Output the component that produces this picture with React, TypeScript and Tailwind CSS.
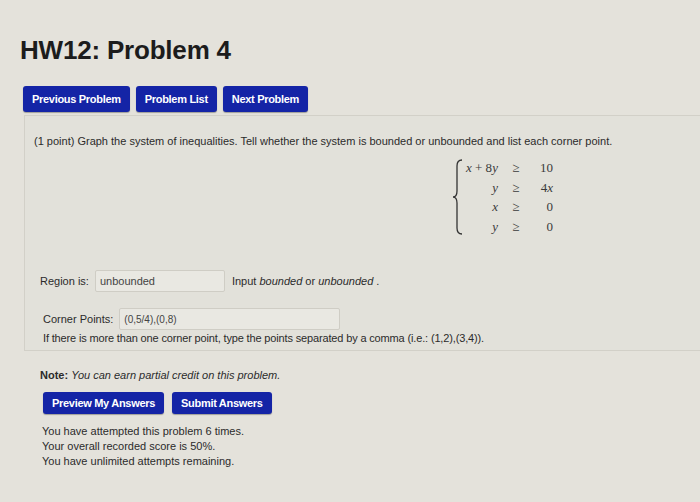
import React from "react";

const btn =
  "h-[26px] px-[9px] rounded-[3px] bg-[#1424a6] text-white text-[11px] font-bold tracking-[-0.3px] flex items-center shadow-[0_1px_1px_rgba(0,0,0,0.3)]";

export default function App() {
  return (
    <div
      className="w-[700px] h-[502px] overflow-hidden bg-[#e4e2db] text-[#2b2b2b]"
      style={{ fontFamily: '"Liberation Sans", Arial, sans-serif' }}
    >
      <div className="pt-[34px] pl-[20px]">
        <h1 className="text-[26px] leading-[32px] font-semibold text-[#1c1c1c] tracking-[-0.2px]">
          HW12: Problem 4
        </h1>
      </div>
      <div className="flex gap-[6px] pl-[23px] mt-[20px]">
        <div className={btn}>Previous Problem</div>
        <div className={btn}>Problem List</div>
        <div className={btn}>Next Problem</div>
      </div>

      <div className="ml-[24px] mt-[3px] h-[236px] border border-[#d2d0c8] border-r-0 bg-[#e2e1da] pl-[9px] pt-[18px]">
        <div className="text-[11px] leading-[14px]">
          (1 point) Graph the system of inequalities. Tell whether the system is
          bounded or unbounded and list each corner point.
        </div>

        <div className="flex justify-start pl-[418px] mt-[10px]">
          <div className="flex items-stretch" style={{ fontFamily: '"Liberation Serif", "Times New Roman", serif' }}>
            <svg width="12" height="76" viewBox="0 0 12 76" className="mt-[1px]">
              <path
                d="M10 1 Q5 1 5 7 L5 32 Q5 38 1 38 Q5 38 5 44 L5 69 Q5 75 10 75"
                fill="none"
                stroke="#333"
                strokeWidth="1.3"
              />
            </svg>
            <div className="grid grid-cols-[auto_36px_auto] text-[13px] leading-[19.5px] text-[#3a3a3a] ml-[2px]">
              <span className="text-right italic">x<span className="not-italic"> + 8</span>y</span>
              <span className="text-center">≥</span>
              <span className="text-right pl-[6px]">10</span>
              <span className="text-right italic">y</span>
              <span className="text-center">≥</span>
              <span className="text-right">4<i>x</i></span>
              <span className="text-right italic">x</span>
              <span className="text-center">≥</span>
              <span className="text-right">0</span>
              <span className="text-right italic">y</span>
              <span className="text-center">≥</span>
              <span className="text-right">0</span>
            </div>
          </div>
        </div>

        <div className="flex items-center mt-[34px] pl-[6px] text-[11px]">
          <span>Region is:</span>
          <div className="ml-[6px] w-[130px] h-[22px] bg-[#e9e8e2] border border-[#cfcdc5] rounded-[2px] flex items-center pl-[4px] text-[#444]">
            unbounded
          </div>
          <span className="ml-[7px]">
            Input <i>bounded</i> or <i>unbounded</i> .
          </span>
        </div>

        <div className="flex items-center mt-[16px] pl-[9px] text-[11px]">
          <span>Corner Points:</span>
          <div className="ml-[6px] w-[221px] h-[22px] bg-[#e9e8e2] border border-[#cfcdc5] rounded-[2px] flex items-center pl-[4px] text-[10px] text-[#444]">
            (0,5/4),(0,8)
          </div>
        </div>
        <div className="pl-[9px] mt-[1px] text-[11px] leading-[14px] tracking-[-0.15px]">
          If there is more than one corner point, type the points separated by a
          comma (i.e.: (1,2),(3,4)).
        </div>
      </div>

      <div className="pl-[40px] mt-[17px] text-[11px] leading-[14px]">
        <b>Note:</b> <i>You can earn partial credit on this problem.</i>
      </div>
      <div className="flex gap-[8px] pl-[43px] mt-[10px]">
        <div className={btn + " !h-[22px]"}>Preview My Answers</div>
        <div className={btn + " !h-[22px]"}>Submit Answers</div>
      </div>
      <div className="pl-[42px] mt-[10px] text-[11px] leading-[15px]">
        <div>You have attempted this problem 6 times.</div>
        <div>Your overall recorded score is 50%.</div>
        <div>You have unlimited attempts remaining.</div>
      </div>
    </div>
  );
}
